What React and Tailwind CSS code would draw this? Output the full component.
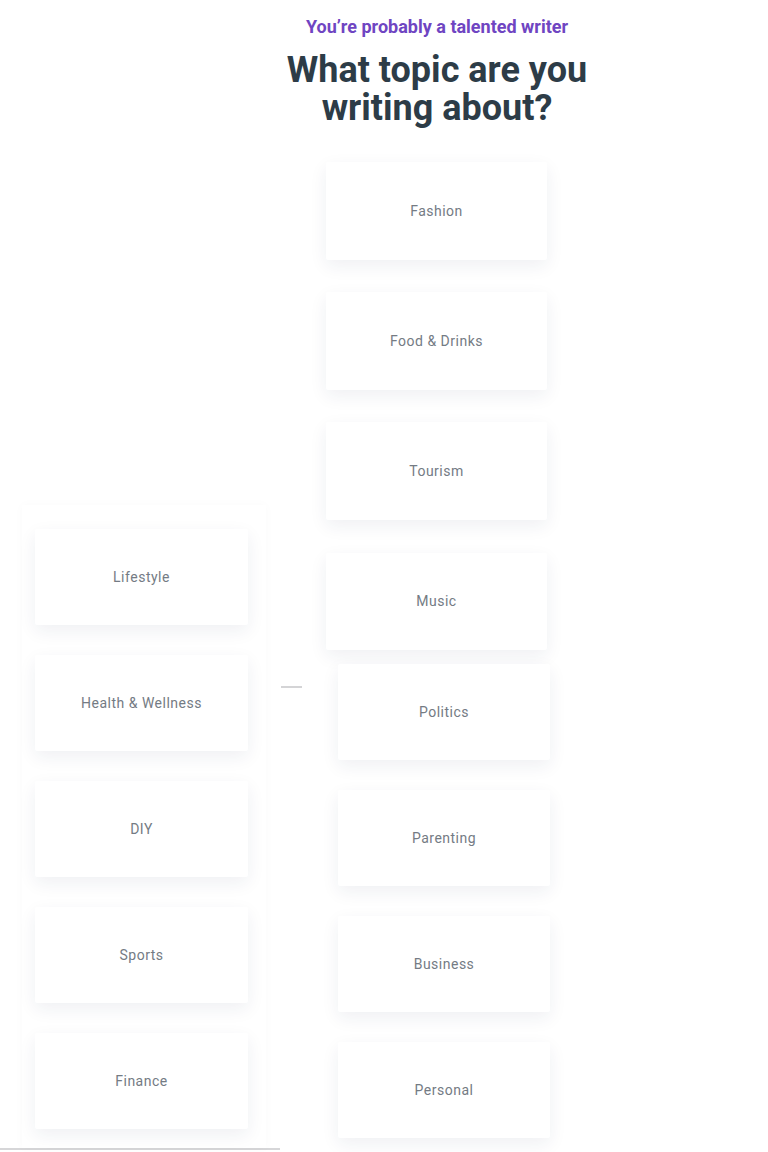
import React from "react";

const Card = ({ label, className = "" }) => (
  <div
    className={`flex items-center justify-center bg-white rounded-[2px] shadow-[0_6px_18px_rgba(30,40,90,0.07)] ${className}`}
  >
    <span className="text-[14px] tracking-[0.5px] text-[#747b84]">{label}</span>
  </div>
);

export default function App() {
  const top = ["Fashion", "Food & Drinks", "Tourism"];
  const left = ["Lifestyle", "Health & Wellness", "DIY", "Sports", "Finance"];
  const right = ["Politics", "Parenting", "Business", "Personal"];
  return (
    <div
      className="w-[768px] h-[1152px] overflow-hidden bg-white"
      style={{ fontFamily: "Roboto, 'Noto Sans', sans-serif" }}
    >
      <div className="ml-[262px] w-[350px] pt-[16px] text-center">
        <div className="text-[18px] leading-[22px] font-bold text-[#6f45c2]">
          You’re probably a talented writer
        </div>
        <h1 className="mt-[13px] text-[36px] leading-[38px] font-bold text-[#2d3c47]">
          What topic are you writing about?
        </h1>
      </div>

      <div className="ml-[326px] mt-[35px] flex w-[221px] flex-col gap-[32px]">
        {top.map((t) => (
          <Card key={t} label={t} className="h-[98px] w-[221px]" />
        ))}
      </div>

      <div className="-mt-[15px] flex items-start">
        <div className="ml-[22px] w-[244px] h-[643px] pt-[24px] pl-[13px] bg-white shadow-[0_0_10px_rgba(30,40,90,0.025)]">
          <div className="flex flex-col gap-[30px]">
            {left.map((t) => (
              <Card key={t} label={t} className="h-[96px] w-[213px]" />
            ))}
          </div>
        </div>
        <div className="w-[60px]">
          <div className="ml-[15px] mt-[181px] h-[2px] w-[21px] bg-[#d4d4d6]" />
        </div>
        <div className="flex flex-col">
          <Card label="Music" className="mt-[48px] h-[97px] w-[221px]" />
          <div className="ml-[12px] mt-[14px] flex flex-col gap-[30px]">
            {right.map((t) => (
              <Card key={t} label={t} className="h-[96px] w-[212px]" />
            ))}
          </div>
        </div>
      </div>
      <div className="h-[2px] w-[280px] bg-[#d6d6d8]" />
    </div>
  );
}
